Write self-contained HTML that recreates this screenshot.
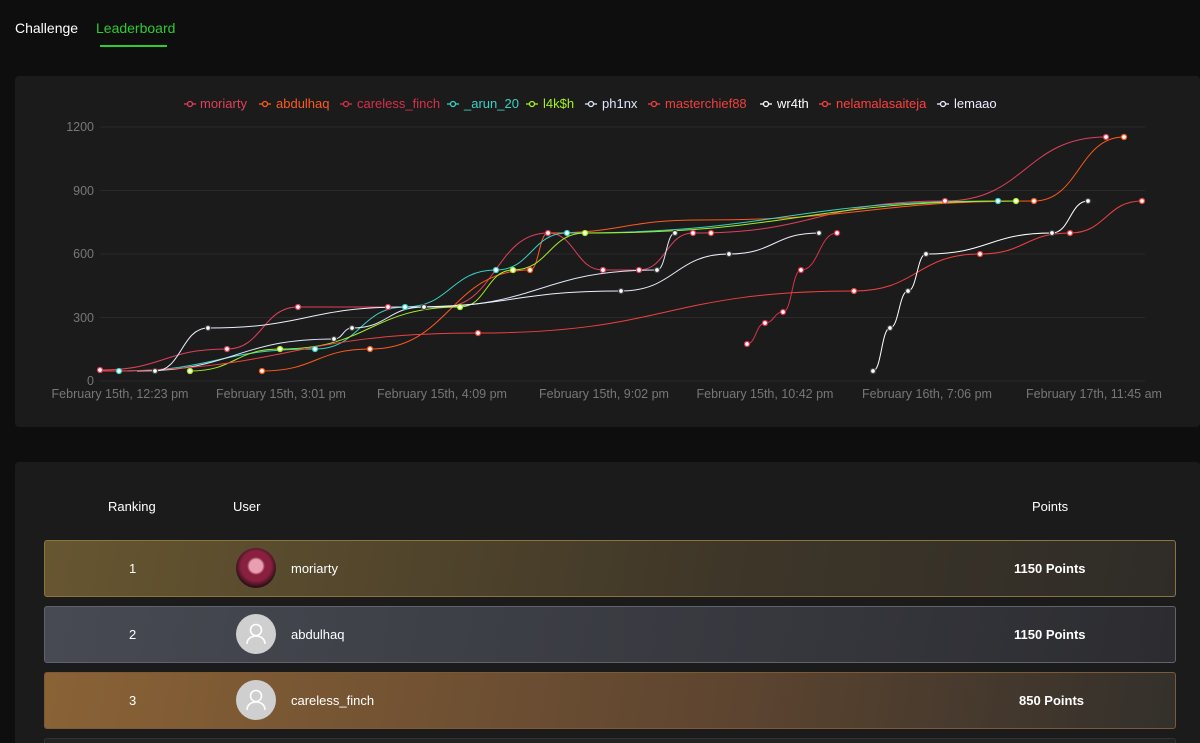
<!DOCTYPE html>
<html style="height:743px;overflow:hidden"><head><style>
body{margin:0;width:1200px;height:743px;overflow:hidden;background:#0e0e0e;font-family:"Liberation Sans",sans-serif;color:#fff;position:relative}
.nav{position:absolute;top:20px;font-size:14px}
.p1{position:absolute;left:15px;top:76px;width:1185px;height:351px;background:#1b1b1b;border-radius:4px}
.p2{position:absolute;left:15px;top:462px;width:1185px;height:290px;background:#1b1b1b;border-radius:4px}
.row{position:absolute;left:44px;width:1130px;height:55px;border:1px solid;border-radius:3px;font-size:13px}
.row span{position:absolute;top:20px}
.av{position:absolute;left:191px;top:7px;width:40px;height:40px;border-radius:50%;background:#cfcfcf}
.th{position:absolute;top:499px;font-size:13px}
</style></head><body>
<div class="nav" style="left:15px">Challenge</div>
<div class="nav" style="left:96px;color:#2ecc2e">Leaderboard</div>
<div style="position:absolute;left:100px;top:45px;width:67px;height:2px;background:#2ecc2e"></div>
<div class="p1"></div>
<svg style="position:absolute;left:0;top:0" width="1200" height="430" font-family="Liberation Sans, sans-serif">
<g font-size="13">
<text x="200" y="108" fill="#e0405a">moriarty</text><text x="276" y="108" fill="#ff5a1f">abdulhaq</text><text x="357" y="108" fill="#d8304a">careless_finch</text><text x="464" y="108" fill="#3ad1c4">_arun_20</text><text x="543" y="108" fill="#a3f020">l4k$h</text><text x="602" y="108" fill="#dde8ff">ph1nx</text><text x="665" y="108" fill="#f04040">masterchief88</text><text x="777" y="108" fill="#fff">wr4th</text><text x="836" y="108" fill="#ff4040">nelamalasaiteja</text><text x="954" y="108" fill="#eef">lemaao</text>
</g>
<g stroke-width="1.3" fill="#1b1b1b">
<g stroke="#e0405a"><path d="M184 104h12"/><circle cx="190" cy="104" r="2.5"/></g>
<g stroke="#ff5a1f"><path d="M259 104h12"/><circle cx="265" cy="104" r="2.5"/></g>
<g stroke="#d8304a"><path d="M340 104h12"/><circle cx="346" cy="104" r="2.5"/></g>
<g stroke="#3ad1c4"><path d="M447 104h12"/><circle cx="453" cy="104" r="2.5"/></g>
<g stroke="#a3f020"><path d="M526 104h12"/><circle cx="532" cy="104" r="2.5"/></g>
<g stroke="#dde8ff"><path d="M585 104h12"/><circle cx="591" cy="104" r="2.5"/></g>
<g stroke="#f04040"><path d="M648 104h12"/><circle cx="654" cy="104" r="2.5"/></g>
<g stroke="#fff"><path d="M760 104h12"/><circle cx="766" cy="104" r="2.5"/></g>
<g stroke="#ff4040"><path d="M819 104h12"/><circle cx="825" cy="104" r="2.5"/></g>
<g stroke="#eef"><path d="M937 104h12"/><circle cx="943" cy="104" r="2.5"/></g>
</g>
<g stroke="#2a2a2a"><path d="M100 127H1145M100 190.5H1145M100 254H1145M100 317.5H1145M100 381H1145"/></g>
<g font-size="12.5" fill="#777" text-anchor="end"><text x="94" y="131">1200</text><text x="94" y="195">900</text><text x="94" y="258">600</text><text x="94" y="322">300</text><text x="94" y="385">0</text></g>
<g font-size="12.5" fill="#777" text-anchor="middle"><text x="120" y="398">February 15th, 12:23 pm</text><text x="281" y="398">February 15th, 3:01 pm</text><text x="442" y="398">February 15th, 4:09 pm</text><text x="604" y="398">February 15th, 9:02 pm</text><text x="765" y="398">February 15th, 10:42 pm</text><text x="927" y="398">February 16th, 7:06 pm</text><text x="1094" y="398">February 17th, 11:45 am</text></g>
<g id="lines" fill="none" stroke-width="1">
<path stroke="#e0405a" data-p="100,370 227,349 298,307 388,307 443,307 548,233 603,270 639,270 693,233 945,201 1106,137"/>
<path stroke="#ff5a1f" data-p="262,371 370,349 530,270 548,233 700,220 1034,201 1124,137"/>
<path stroke="#d8304a" data-p="747,344 765,323 783,312 801,270 837,233"/>
<path stroke="#3ad1c4" data-p="119,371 315,349 405,307 496,270 567,233 998,201"/>
<path stroke="#a3f020" data-p="190,371 280,349 460,307 513,270 585,233 1016,201"/>
<path stroke="#dde8ff" data-p="137,371 334,339 352,328 424,307 657,270 675,233"/>
<path stroke="#f04040" data-p="101,371 478,333 854,291 980,254 1070,233 1142,201"/>
<path stroke="#fff" data-p="873,371 890,328 908,291 926,254 1052,233 1088,201"/>
<path stroke="#eef" data-p="155,371 208,328 405,307 621,291 729,254 819,233"/>
</g>
<g stroke-width="1.3" fill="#fff">
<g stroke="#e0405a"><circle cx="100" cy="370" r="2.5"/><circle cx="227" cy="349" r="2.5"/><circle cx="298" cy="307" r="2.5"/><circle cx="388" cy="307" r="2.5"/><circle cx="548" cy="233" r="2.5"/><circle cx="603" cy="270" r="2.5"/><circle cx="639" cy="270" r="2.5"/><circle cx="693" cy="233" r="2.5"/><circle cx="945" cy="201" r="2.5"/><circle cx="1106" cy="137" r="2.5"/></g>
<g stroke="#ff5a1f"><circle cx="262" cy="371" r="2.5"/><circle cx="370" cy="349" r="2.5"/><circle cx="530" cy="270" r="2.5"/><circle cx="1034" cy="201" r="2.5"/><circle cx="1124" cy="137" r="2.5"/></g>
<g stroke="#d8304a"><circle cx="747" cy="344" r="2.5"/><circle cx="765" cy="323" r="2.5"/><circle cx="783" cy="312" r="2.5"/><circle cx="801" cy="270" r="2.5"/><circle cx="837" cy="233" r="2.5"/></g>
<g stroke="#3ad1c4"><circle cx="119" cy="371" r="2.5"/><circle cx="315" cy="349" r="2.5"/><circle cx="405" cy="307" r="2.5"/><circle cx="496" cy="270" r="2.5"/><circle cx="567" cy="233" r="2.5"/><circle cx="998" cy="201" r="2.5"/></g>
<g stroke="#a3f020"><circle cx="190" cy="371" r="2.5"/><circle cx="280" cy="349" r="2.5"/><circle cx="460" cy="307" r="2.5"/><circle cx="513" cy="270" r="2.5"/><circle cx="585" cy="233" r="2.5"/><circle cx="1016" cy="201" r="2.5"/></g>
<g stroke="#f04040"><circle cx="478" cy="333" r="2.5"/><circle cx="854" cy="291" r="2.5"/><circle cx="980" cy="254" r="2.5"/><circle cx="1070" cy="233" r="2.5"/><circle cx="1142" cy="201" r="2.5"/><circle cx="711" cy="233" r="2.5"/></g>
<g stroke="#444"><circle cx="873" cy="371" r="2.5"/><circle cx="890" cy="328" r="2.5"/><circle cx="908" cy="291" r="2.5"/><circle cx="926" cy="254" r="2.5"/><circle cx="1052" cy="233" r="2.5"/><circle cx="1088" cy="201" r="2.5"/><circle cx="155" cy="371" r="2.5"/><circle cx="208" cy="328" r="2.5"/><circle cx="352" cy="328" r="2.5"/><circle cx="334" cy="339" r="2.5"/><circle cx="621" cy="291" r="2.5"/><circle cx="729" cy="254" r="2.5"/><circle cx="819" cy="233" r="2.5"/><circle cx="657" cy="270" r="2.5"/><circle cx="675" cy="233" r="2.5"/><circle cx="424" cy="307" r="2.5"/></g>
</g>
</svg>
<script>
document.querySelectorAll('#lines path').forEach(function(el){
var p=el.getAttribute('data-p').split(' ').map(function(s){return s.split(',').map(Number)});
var d='M'+p[0][0]+' '+p[0][1];
for(var i=0;i<p.length-1;i++){
var a=p[i],b=p[i+1],dx=(b[0]-a[0])/2;
d+=' C'+(a[0]+dx)+' '+a[1]+' '+(b[0]-dx)+' '+b[1]+' '+b[0]+' '+b[1];
}
el.setAttribute('d',d);
});
</script>
<div class="p2"></div>
<div class="th" style="left:108px">Ranking</div><div class="th" style="left:233px">User</div><div class="th" style="left:1032px">Points</div>
<div class="row" style="top:540px;background:linear-gradient(100deg,#675630,#3e3628 60%,#2f2c28);border-color:#8a7440"><span style="left:84px">1</span><div class="av" style="background:radial-gradient(circle at 50% 45%,#e8a0b0 0 22%,#8a2040 30% 50%,#301018 70%)"></div><span style="left:246px">moriarty</span><span style="left:969px;font-weight:bold">1150 Points</span></div>
<div class="row" style="top:606px;background:linear-gradient(100deg,#474a53,#35363c 70%,#2c2c30);border-color:#60636c"><span style="left:84px">2</span><div class="av"><svg width="40" height="40"><circle cx="20" cy="16" r="5.5" fill="none" stroke="#fff" stroke-width="1.6"/><path d="M11 30c0-5 4-8 9-8s9 3 9 8" fill="none" stroke="#fff" stroke-width="1.6"/></svg></div><span style="left:246px">abdulhaq</span><span style="left:969px;font-weight:bold">1150 Points</span></div>
<div class="row" style="top:672px;background:linear-gradient(100deg,#8a6236,#5e4530 60%,#33302b);border-color:#7a5a38"><span style="left:84px">3</span><div class="av"><svg width="40" height="40"><circle cx="20" cy="16" r="5.5" fill="none" stroke="#fff" stroke-width="1.6"/><path d="M11 30c0-5 4-8 9-8s9 3 9 8" fill="none" stroke="#fff" stroke-width="1.6"/></svg></div><span style="left:246px">careless_finch</span><span style="left:974px;font-weight:bold">850 Points</span></div>
<div class="row" style="top:738px;height:20px;background:#222;border-color:#333"></div>
</body></html>
